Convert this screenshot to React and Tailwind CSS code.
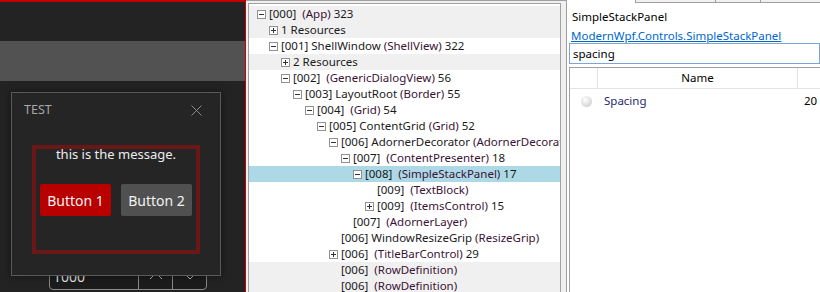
import React from "react";

const TREE = [
  { lvl: 0, box: "-", idx: "[000]", name: "", type: "(App)", count: "323", bg: "grey" },
  { lvl: 1, box: "+", text: "1 Resources", bg: "grey" },
  { lvl: 1, box: "-", idx: "[001]", name: "ShellWindow", type: "(ShellView)", count: "322" },
  { lvl: 2, box: "+", text: "2 Resources", bg: "grey" },
  { lvl: 2, box: "-", idx: "[002]", name: "", type: "(GenericDialogView)", count: "56" },
  { lvl: 3, box: "-", idx: "[003]", name: "LayoutRoot", type: "(Border)", count: "55" },
  { lvl: 4, box: "-", idx: "[004]", name: "", type: "(Grid)", count: "54" },
  { lvl: 5, box: "-", idx: "[005]", name: "ContentGrid", type: "(Grid)", count: "52" },
  { lvl: 6, box: "-", idx: "[006]", name: "AdornerDecorator", type: "(AdornerDecorator)", count: "20" },
  { lvl: 7, box: "-", idx: "[007]", name: "", type: "(ContentPresenter)", count: "18" },
  { lvl: 8, box: "-", idx: "[008]", name: "", type: "(SimpleStackPanel)", count: "17", bg: "sel" },
  { lvl: 9, idx: "[009]", name: "", type: "(TextBlock)" },
  { lvl: 9, box: "+", idx: "[009]", name: "", type: "(ItemsControl)", count: "15" },
  { lvl: 7, idx: "[007]", name: "", type: "(AdornerLayer)" },
  { lvl: 6, idx: "[006]", name: "WindowResizeGrip", type: "(ResizeGrip)" },
  { lvl: 6, box: "+", idx: "[006]", name: "", type: "(TitleBarControl)", count: "29" },
  { lvl: 6, idx: "[006]", name: "", type: "(RowDefinition)", bg: "grey" },
  { lvl: 6, idx: "[006]", name: "", type: "(RowDefinition)", bg: "grey" },
];

const Expander = ({ kind }) => (
  <svg width="9" height="9" viewBox="0 0 9 9" className="shrink-0">
    <rect x="0.5" y="0.5" width="8" height="8" fill="#fff" stroke="#919191" />
    <path d="M2 4.5h5" stroke="#333" />
    {kind === "+" && <path d="M4.5 2v5" stroke="#333" />}
  </svg>
);

const TreeRow = ({ row }) => {
  const bg = row.bg === "sel" ? "bg-[#add8e6]" : row.bg === "grey" ? "bg-[#f0f0f0]" : "bg-white";
  return (
    <div className={`flex h-[16px] items-center whitespace-pre ${bg}`}>
      <div className="shrink-0" style={{ width: 8 + row.lvl * 12 }} />
      {row.box ? <Expander kind={row.box} /> : <div className="w-[9px] shrink-0" />}
      <span className="ml-[3px] text-[#1a1a1a]">
        {row.text ? (
          row.text
        ) : (
          <>
            {row.idx}
            {row.name ? ` ${row.name} ` : "  "}
            <span className="text-[#3a1236]">{row.type}</span>
            {row.count ? ` ${row.count}` : ""}
          </>
        )}
      </span>
    </div>
  );
};

export default function App() {
  return (
    <div className="flex h-[292px] w-[820px] overflow-hidden font-['Noto_Sans',sans-serif] text-[11.5px]">
      {/* dark app preview */}
      <div className="relative flex w-[246px] shrink-0 flex-col border-r border-[#c40000] bg-[#232323]">
        <div className="h-[2px] bg-[#c40000]" />
        <div className="h-[39px]" />
        <div className="h-[40px] bg-[#525252]" />
        <div className="ml-[49px] mt-[181px] flex h-[28px] w-[158px] rounded-b-[4px] border border-[#8a8a8a] bg-[#1c1c1c] text-[14px] text-[#e6e6e6]">
          <div className="flex flex-1 items-center pl-[3px]">1000</div>
          <div className="flex w-[34px] items-center justify-center border-l border-[#8a8a8a]">
            <svg width="14" height="8" viewBox="0 0 14 8"><path d="M1 7l6-6 6 6" fill="none" stroke="#bbb" /></svg>
          </div>
          <div className="flex w-[34px] items-center justify-center border-l border-[#8a8a8a]">
            <svg width="14" height="8" viewBox="0 0 14 8"><path d="M1 1l6 6 6-6" fill="none" stroke="#bbb" /></svg>
          </div>
        </div>

        {/* dialog */}
        <div className="absolute left-[11px] top-[92px] flex h-[184px] w-[210px] flex-col border border-[#5a5a5a] bg-[#252525] shadow-[0_0_8px_rgba(0,0,0,0.5)]">
          <div className="flex h-[32px] items-center justify-between pl-[12px] pr-[18px] pt-[2px]">
            <span className="text-[12.5px] text-[#a8a8a8]">TEST</span>
            <svg width="11" height="11" viewBox="0 0 11 11"><path d="M0.5 0.5l10 10M10.5 0.5l-10 10" stroke="#8a8a8a" /></svg>
          </div>
          <div className="ml-[20px] mt-[20px] flex h-[109px] w-[168px] flex-col items-center border-[4px] border-[#6a1717]">
            <div className="-mt-[5px] text-[13px] leading-[20px] text-[#ececec]">this is the message.</div>
            <div className="mt-[20px] flex gap-[10px] text-[14px] text-[#f2f2f2]">
              <div className="flex h-[32px] w-[71px] items-center justify-center rounded-[2px] bg-[#b80000]">Button 1</div>
              <div className="flex h-[32px] w-[71px] items-center justify-center rounded-[2px] bg-[#505050]">Button 2</div>
            </div>
          </div>
        </div>
      </div>

      {/* visual tree */}
      <div className="flex w-[320px] shrink-0 flex-col border-t border-[#a0a0a0] bg-[#f0f0f0]">
        <div className="ml-[2px] mt-[2px] w-[313px] flex-1 overflow-hidden border-l border-r border-t border-[#a0a0a0] bg-white pt-[2px]">
          {TREE.map((row, i) => (
            <TreeRow key={i} row={row} />
          ))}
        </div>
      </div>

      {/* properties */}
      <div className="flex flex-1 flex-col border-l border-[#a0a0a0] bg-white text-black">
        <div className="flex h-[3px]">
          <div className="w-[68px]" />
          <div className="w-[80px] border-b border-l border-[#a0a0a0] bg-[#f0f0f0]" />
          <div className="w-[45px] border-b border-l border-[#a0a0a0] bg-[#f0f0f0]" />
          <div className="flex-1 border-b border-l border-[#a0a0a0] bg-[#f0f0f0]" />
        </div>
        <div className="mt-[6px] pl-[5px] leading-[15px]">SimpleStackPanel</div>
        <div className="mt-[4px] pl-[4px] leading-[15px] text-[#0066cc] underline">ModernWpf.Controls.SimpleStackPanel</div>
        <div className="ml-[2px] flex h-[21px] items-center border border-[#7aa5d6] pl-[3px]">spacing</div>
        <div className="ml-[2px] mt-[3px] flex flex-1 flex-col border-l border-t border-[#a0a0a0]">
          <div className="flex h-[21px] border-b border-[#e2e2e2]">
            <div className="w-[28px] border-r border-[#e2e2e2]" />
            <div className="flex w-[200px] items-center justify-center border-r border-[#e2e2e2]">Name</div>
            <div className="flex-1" />
          </div>
          <div className="mt-[2px] flex h-[20px] items-center">
            <div className="w-[28px] pl-[11px]">
              <div className="h-[11px] w-[11px] rounded-full bg-[radial-gradient(circle_at_40%_35%,#ffffff,#c4c4c4)]" />
            </div>
            <div className="w-[200px] pl-[6px] text-[#1f2a70]">Spacing</div>
            <div className="flex-1 pl-[6px]">20</div>
          </div>
        </div>
      </div>
    </div>
  );
}
